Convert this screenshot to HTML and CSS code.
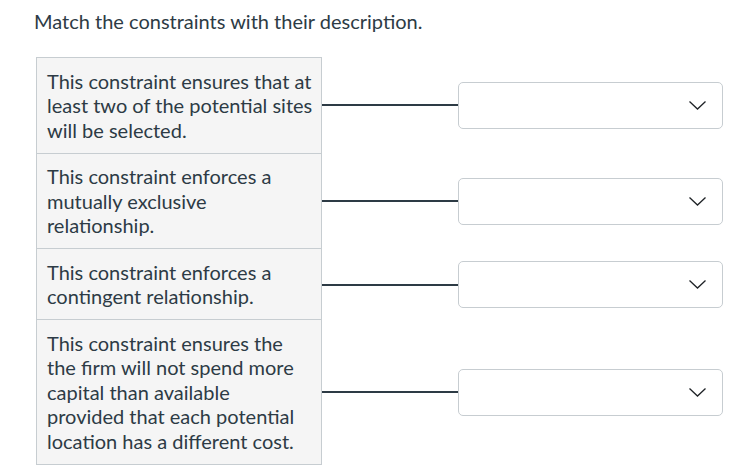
FILE: index.html
```html
<!DOCTYPE html>
<html lang="en">
<head>
    <meta charset="UTF-8">
    <title>Matching Question</title>
    <link rel="stylesheet" href="styles.css">
</head>
<body>

<div class="question">
    <p class="prompt">Match the constraints with their description.</p>

    <div class="match-list">
        <div class="match-row">
            <div class="match-text">This constraint ensures that at least two of the potential sites will be selected.</div>
            <div class="connector"></div>
            <div class="answer">
                <select aria-label="Answer 1"><option></option></select>
                <svg class="chevron" width="17" height="9" viewBox="0 0 17 9"><path d="M0.5 0.5 L8.5 8 L16.5 0.5" fill="none" stroke="#1f2327" stroke-width="1.3"/></svg>
            </div>
        </div>

        <div class="match-row">
            <div class="match-text">This constraint enforces a mutually exclusive relationship.</div>
            <div class="connector"></div>
            <div class="answer">
                <select aria-label="Answer 2"><option></option></select>
                <svg class="chevron" width="17" height="9" viewBox="0 0 17 9"><path d="M0.5 0.5 L8.5 8 L16.5 0.5" fill="none" stroke="#1f2327" stroke-width="1.3"/></svg>
            </div>
        </div>

        <div class="match-row">
            <div class="match-text">This constraint enforces a contingent relationship.</div>
            <div class="connector"></div>
            <div class="answer">
                <select aria-label="Answer 3"><option></option></select>
                <svg class="chevron" width="17" height="9" viewBox="0 0 17 9"><path d="M0.5 0.5 L8.5 8 L16.5 0.5" fill="none" stroke="#1f2327" stroke-width="1.3"/></svg>
            </div>
        </div>

        <div class="match-row">
            <div class="match-text">This constraint ensures the the firm will not spend more capital than available<br>provided that each potential location has a different cost.</div>
            <div class="connector"></div>
            <div class="answer">
                <select aria-label="Answer 4"><option></option></select>
                <svg class="chevron" width="17" height="9" viewBox="0 0 17 9"><path d="M0.5 0.5 L8.5 8 L16.5 0.5" fill="none" stroke="#1f2327" stroke-width="1.3"/></svg>
            </div>
        </div>
    </div>
</div>

</body>
</html>
```

FILE: styles.css
```css
/* Base */
* {
    box-sizing: border-box;
}

body {
    margin: 0;
    font-family: Lato, "Open Sans", sans-serif;
    color: #2d3b45;
    background: #fff;
}

.question {
    padding: 9px 0 0 36px;
}

.prompt {
    margin: 0 0 24px -2px;
    font-size: 20px;
    line-height: 24px;
}

/* Rows: description box, connector line, dropdown */
.match-row {
    display: flex;
    align-items: center;
}

.match-text {
    width: 286px;
    flex: none;
    padding: 10.5px 7px 10.5px 10px;
    font-size: 20px;
    line-height: 24.5px;
    background-color: #f5f5f5;
    border: 1px solid #c7cdd1;
}

.match-row + .match-row .match-text {
    margin-top: -1px;
}

.connector {
    width: 136px;
    height: 2px;
    flex: none;
    background-color: #2d3b45;
}

.answer {
    position: relative;
    width: 265px;
    height: 47px;
}

.answer select {
    appearance: none;
    -webkit-appearance: none;
    width: 100%;
    height: 100%;
    border: 1px solid #c7cdd1;
    border-radius: 5px;
    background: #fff;
    font: inherit;
}

.chevron {
    position: absolute;
    right: 17px;
    top: 19px;
    pointer-events: none;
}
```
